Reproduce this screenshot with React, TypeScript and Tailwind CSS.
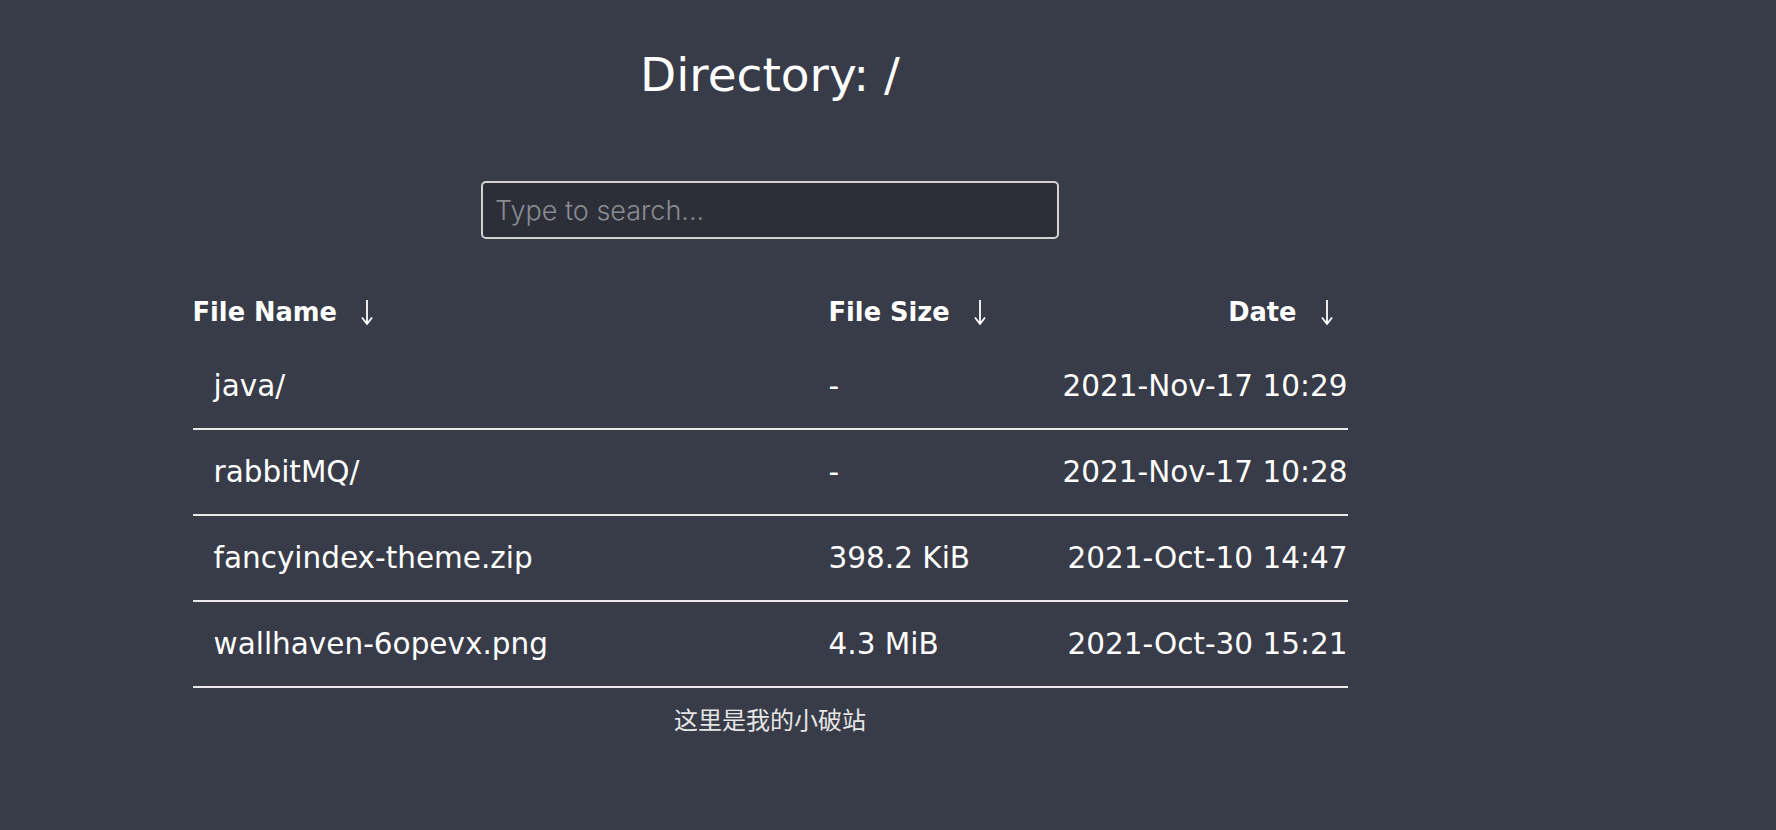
import React from "react"

const files = [
  { name: "java/", size: "-", date: "2021-Nov-17 10:29" },
  { name: "rabbitMQ/", size: "-", date: "2021-Nov-17 10:28" },
  { name: "fancyindex-theme.zip", size: "398.2 KiB", date: "2021-Oct-10 14:47" },
  { name: "wallhaven-6opevx.png", size: "4.3 MiB", date: "2021-Oct-30 15:21" },
]

function SortArrow({ className = "" }: { className?: string }) {
  return (
    <svg width="12" height="26" viewBox="0 0 12 26" fill="none" className={className}>
      <path d="M6 1 V24.5 M1 18.5 L6 25 L11 18.5" stroke="white" strokeWidth="1.8" strokeLinejoin="miter" />
    </svg>
  )
}

export default function App() {
  return (
    <div className="min-h-screen w-full bg-[#383b48] text-white" style={{ fontFamily: '"DejaVu Sans", Verdana, sans-serif' }}>
      <div className="w-[1540px] flex flex-col items-center pt-[52px] pb-10">
        {/* Title */}
        <h1 className="text-[47px] leading-[46px] font-normal">Directory: /</h1>

        {/* Search */}
        <input
          type="text"
          placeholder="Type to search..."
          className="mt-[83px] w-[578px] h-[58px] rounded-[5px] border-2 border-[#d2d2d2] bg-[#2c2f38] pl-[12px] text-[27px] font-light text-white placeholder:text-[#8a8c93] outline-none"
          style={{ fontFamily: "Inter, sans-serif" }}
        />

        {/* Table */}
        <div className="mt-[42px] w-[1155px]">
          <div className="grid grid-cols-[636px_200px_1fr] h-[63px] items-center text-[25.7px] font-bold">
            <div className="flex items-center">
              <span>File Name</span>
              <SortArrow className="ml-[24px]" />
            </div>
            <div className="flex items-center">
              <span>File Size</span>
              <SortArrow className="ml-[24px]" />
            </div>
            <div className="flex items-center justify-end">
              <span>Date</span>
              <SortArrow className="ml-[24px] mr-[15px]" />
            </div>
          </div>

          {files.map((f) => (
            <div
              key={f.name}
              className="grid grid-cols-[636px_200px_1fr] h-[86px] items-center border-b-2 border-[#e9e9e9] text-[29.5px] leading-[84px]"
            >
              <div className="pl-[21px] whitespace-nowrap">{f.name}</div>
              <div className="whitespace-nowrap">{f.size}</div>
              <div className="text-right whitespace-nowrap">{f.date}</div>
            </div>
          ))}
        </div>

        {/* Footer */}
        <p
          className="mt-[19px] text-[24px] leading-[24px] text-[#e6e6e6]"
          style={{ fontFamily: '"Noto Sans CJK SC", sans-serif' }}
        >
          这里是我的小破站
        </p>
      </div>
    </div>
  )
}
